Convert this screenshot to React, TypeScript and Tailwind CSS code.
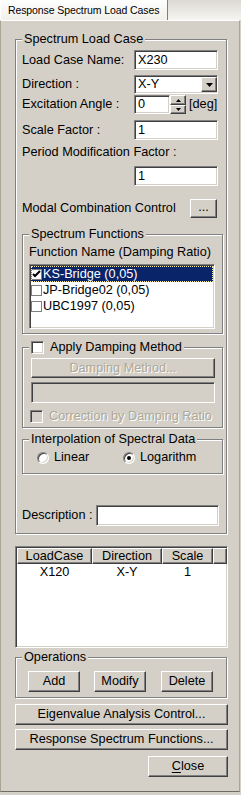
import React from "react";

const sunken =
  "border border-t-[#808080] border-l-[#808080] border-b-white border-r-white shadow-[inset_1px_1px_0_#404040,inset_-1px_-1px_0_#d4d0c8]";
const raised =
  "border border-t-white border-l-white border-b-[#404040] border-r-[#404040] shadow-[inset_-1px_-1px_0_#808080]";
const etched = "border border-[#808080] shadow-[inset_1px_1px_0_#fff,1px_1px_0_#fff]";
const disabledText = "text-[#aca899] [text-shadow:1px_1px_0_#fff]";

function Group({
  label,
  className,
  children,
}: {
  label: React.ReactNode;
  className: string;
  children?: React.ReactNode;
}) {
  return (
    <div className={`relative ${etched} ${className}`}>
      <div className="absolute left-[6px] top-[-8px] flex h-[15px] items-center bg-[#d4d0c8] px-[2px] leading-[15px]">
        {label}
      </div>
      {children}
    </div>
  );
}

function Check({ checked }: { checked?: boolean }) {
  return (
    <div className="flex h-[11px] w-[11px] items-center justify-center border border-[#808080] bg-white">
      {checked && (
        <svg width="9" height="9" viewBox="0 0 9 9">
          <path d="M1 4 L3 6 L8 1" stroke="#000" strokeWidth="2" fill="none" />
        </svg>
      )}
    </div>
  );
}

function Radio({ on }: { on?: boolean }) {
  return (
    <div
      className={`flex h-[12px] w-[12px] items-center justify-center rounded-full bg-white ${sunken}`}
    >
      {on && <div className="h-[4px] w-[4px] rounded-full bg-black" />}
    </div>
  );
}

export default function App() {
  return (
    <div
      className="relative h-[795px] w-[241px] overflow-hidden bg-[#d4d0c8] text-[12.7px] leading-[15px] text-black"
      style={{ fontFamily: '"Liberation Sans", Arial, sans-serif' }}
    >
      {/* tab strip */}
      <div className="flex h-[20px]">
        <div className="flex h-[20px] w-[168px] items-center border-r border-r-[#808080] border-l border-l-white bg-gradient-to-b from-[#fefefe] to-[#f1f0ea] pl-[7px] text-[10.5px] tracking-[-0.1px]">
          Response Spectrum Load Cases
        </div>
        <div className="h-[20px] flex-1 bg-gradient-to-b from-[#dcd9d2] to-[#f6f5f2]" />
      </div>

      {/* page */}
      <div className="h-[772px] w-[240px] border-t border-t-white border-l border-l-[#a9a594] border-r border-r-[#a9a594] border-b border-b-[#6f6c62] pl-[14px]">
        {/* Spectrum Load Case */}
        <Group label="Spectrum Load Case" className="mt-[18px] h-[495px] w-[212px]">
          <div className="flex flex-col pl-[6px] pr-[8px]">
            <div className="mt-[10px] flex h-[20px] items-center justify-between">
              <span>Load Case Name:</span>
              <div className={`flex h-[20px] w-[84px] items-center bg-white pl-[3px] ${sunken}`}>X230</div>
            </div>
            <div className="mt-[5px] flex h-[19px] items-center justify-between">
              <span>Direction :</span>
              <div className={`flex h-[19px] w-[84px] items-center bg-white pl-[3px] ${sunken}`}>
                <span className="flex-1">X-Y</span>
                <div className={`flex h-[15px] w-[16px] items-center justify-center bg-[#d4d0c8] ${raised}`}>
                  <svg width="7" height="4" viewBox="0 0 7 4">
                    <path d="M0 0 H7 L3.5 4 Z" fill="#000" />
                  </svg>
                </div>
              </div>
            </div>
            <div className="mt-[1px] flex h-[19px] items-center">
              <span className="w-[112px]">Excitation Angle :</span>
              <div className={`flex h-[19px] w-[36px] items-center bg-white pl-[3px] ${sunken}`}>0</div>
              <div className="flex h-[19px] w-[16px] flex-col">
                <div className={`flex h-[10px] items-center justify-center bg-[#d4d0c8] ${raised}`}>
                  <svg width="5" height="3" viewBox="0 0 5 3">
                    <path d="M2.5 0 L5 3 H0 Z" fill="#000" />
                  </svg>
                </div>
                <div className={`flex h-[9px] items-center justify-center bg-[#d4d0c8] ${raised}`}>
                  <svg width="5" height="3" viewBox="0 0 5 3">
                    <path d="M0 0 H5 L2.5 3 Z" fill="#000" />
                  </svg>
                </div>
              </div>
              <span className="ml-[3px]">[deg]</span>
            </div>
            <div className="mt-[6px] flex h-[20px] items-center justify-between">
              <span>Scale Factor :</span>
              <div className={`flex h-[20px] w-[84px] items-center bg-white pl-[3px] ${sunken}`}>1</div>
            </div>
            <div className="mt-[5px] flex h-[15px] items-center">Period Modification Factor :</div>
            <div className="mt-[6px] flex h-[20px] items-center justify-end">
              <div className={`flex h-[20px] w-[84px] items-center bg-white pl-[3px] ${sunken}`}>1</div>
            </div>
            <div className="mt-[13px] flex h-[19px] items-center justify-between">
              <span>Modal Combination Control</span>
              <div className={`mr-[1px] flex h-[19px] w-[27px] items-center justify-center bg-[#d4d0c8] pb-[3px] ${raised}`}>
                ...
              </div>
            </div>

            {/* Spectrum Functions */}
            <Group label="Spectrum Functions" className="mt-[16px] h-[100px] w-[201px]">
              <div className="flex flex-col pl-[6px]">
                <div className="mt-[10px] flex h-[15px] items-center">Function Name (Damping Ratio)</div>
                <div className={`mt-[4px] h-[65px] w-[186px] bg-white ${sunken} flex flex-col pt-[1px] pl-[1px]`}>
                  <div className="flex h-[16px] w-[182px] items-center gap-[1px] bg-[#0a246a] text-white outline outline-1 outline-dotted outline-[#f5e9a0] -outline-offset-1">
                    <Check checked />
                    <span>KS-Bridge (0,05)</span>
                  </div>
                  <div className="flex h-[16px] items-center gap-[1px]">
                    <Check />
                    <span>JP-Bridge02 (0,05)</span>
                  </div>
                  <div className="flex h-[16px] items-center gap-[1px]">
                    <Check />
                    <span>UBC1997 (0,05)</span>
                  </div>
                </div>
              </div>
            </Group>

            {/* Apply Damping Method */}
            <Group
              label={
                <div className="flex items-center gap-[6px]">
                  <div className={`h-[13px] w-[13px] bg-white ${sunken}`} />
                  <span>Apply Damping Method</span>
                </div>
              }
              className="mt-[13px] h-[81px] w-[201px]"
            >
              <div className="flex flex-col pl-[8px]">
                <div className={`mt-[10px] flex h-[20px] w-[184px] items-center justify-center bg-[#d4d0c8] ${raised} ${disabledText}`}>
                  Damping Method...
                </div>
                <div className={`mt-[4px] h-[21px] w-[184px] bg-[#d4d0c8] ${sunken}`} />
                <div className="mt-[7px] flex h-[13px] items-center gap-[6px]">
                  <div className={`-ml-[1px] h-[13px] w-[13px] bg-[#d4d0c8] ${sunken}`} />
                  <span className={disabledText}>Correction by Damping Ratio</span>
                </div>
              </div>
            </Group>

            {/* Interpolation */}
            <Group label="Interpolation of Spectral Data" className="mt-[11px] h-[35px] w-[201px]">
              <div className="mt-[11px] flex h-[13px] items-center pl-[14px]">
                <Radio />
                <span className="ml-[5px] w-[69px]">Linear</span>
                <Radio on />
                <span className="ml-[5px]">Logarithm</span>
              </div>
            </Group>

            <div className="mt-[31px] flex h-[21px] items-center justify-between">
              <span>Description :</span>
              <div className={`-mr-[1px] h-[21px] w-[123px] bg-white ${sunken}`} />
            </div>
          </div>
        </Group>

        {/* List view */}
        <div className={`mt-[12px] h-[102px] w-[213px] bg-white ${sunken} flex flex-col pl-[1px] pt-[1px]`}>
          <div className="flex h-[16px]">
            <div className={`flex h-[16px] w-[75px] items-center justify-center bg-[#d4d0c8] ${raised}`}>LoadCase</div>
            <div className={`flex h-[16px] w-[70px] items-center justify-center bg-[#d4d0c8] ${raised}`}>Direction</div>
            <div className={`flex h-[16px] w-[51px] items-center justify-center bg-[#d4d0c8] ${raised}`}>Scale</div>
            <div className={`h-[16px] flex-1 bg-[#d4d0c8] ${raised}`} />
          </div>
          <div className="flex h-[16px] items-center">
            <span className="w-[75px] text-center">X120</span>
            <span className="w-[70px] text-center">X-Y</span>
            <span className="w-[51px] text-center">1</span>
          </div>
        </div>

        {/* Operations */}
        <Group label="Operations" className="mt-[9px] h-[41px] w-[212px]">
          <div className="mt-[13px] flex pl-[12px]">
            <div className={`flex h-[21px] w-[52px] items-center justify-center bg-[#d4d0c8] ${raised}`}>Add</div>
            <div className={`ml-[14px] flex h-[21px] w-[52px] items-center justify-center bg-[#d4d0c8] ${raised}`}>Modify</div>
            <div className={`ml-[15px] flex h-[21px] w-[52px] items-center justify-center bg-[#d4d0c8] ${raised}`}>Delete</div>
          </div>
        </Group>

        <div className={`mt-[6px] flex h-[21px] w-[213px] items-center justify-center bg-[#d4d0c8] ${raised}`}>
          Eigenvalue Analysis Control...
        </div>
        <div className={`mt-[4px] flex h-[21px] w-[213px] items-center justify-center bg-[#d4d0c8] ${raised}`}>
          Response Spectrum Functions...
        </div>
        <div className="mt-[6px] flex w-[213px] justify-end">
          <div className={`flex h-[21px] w-[80px] items-center justify-center bg-[#d4d0c8] ${raised}`}>
            <span>
              <span className="underline underline-offset-2">C</span>lose
            </span>
          </div>
        </div>
      </div>
    </div>
  );
}
